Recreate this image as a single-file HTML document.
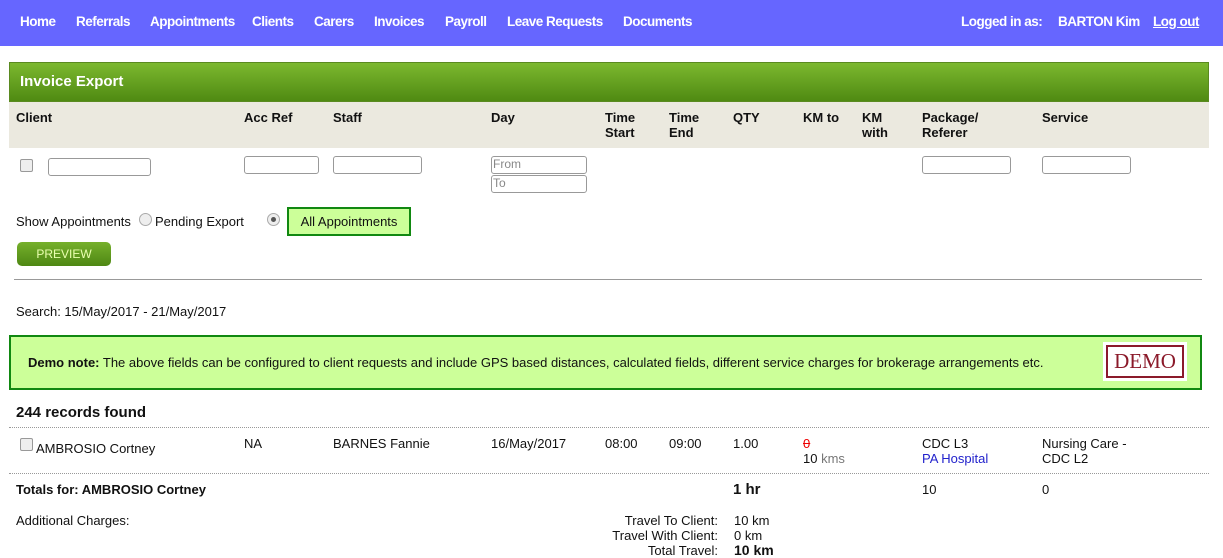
<!DOCTYPE html>
<html><head><style>
body{margin:0;width:1223px;height:556px;overflow:hidden;background:#fff;font-family:"Liberation Sans",sans-serif;font-size:13px;color:#111;position:relative}
.a{position:absolute;white-space:nowrap}
.nav{position:absolute;left:0;top:0;width:1223px;height:46px;background:#6666ff}
.nav span{position:absolute;top:14px;color:#fff;font-size:13.5px;font-weight:bold;letter-spacing:-0.5px}
.hdr{position:absolute;left:9px;top:62px;width:1200px;height:40px;background:linear-gradient(#7cb82f,#4f8a12);border:1px solid #5a8a20;box-sizing:border-box}
.th{position:absolute;left:9px;top:102px;width:1200px;height:46px;background:#ebe9df}
input.t{position:absolute;height:18px;border:1px solid #999;border-radius:3px;box-sizing:border-box;background:#fff}
.b{font-weight:bold}
.dot{position:absolute;left:9px;width:1200px;border-top:1px dotted #999}
</style></head><body>
<div class="nav">
<span style="left:20px">Home</span><span style="left:76px">Referrals</span><span style="left:150px">Appointments</span><span style="left:252px">Clients</span><span style="left:314px">Carers</span><span style="left:374px">Invoices</span><span style="left:445px">Payroll</span><span style="left:507px">Leave Requests</span><span style="left:623px">Documents</span>
<span style="left:961px">Logged in as:</span><span style="left:1058px">BARTON Kim</span><span style="left:1153px;text-decoration:underline">Log out</span>
</div>
<div class="hdr"><span class="a b" style="left:10px;top:10px;color:#fff;font-size:15px">Invoice Export</span></div>
<div class="th"></div>
<span class="a b" style="left:16px;top:110px">Client</span>
<span class="a b" style="left:244px;top:110px">Acc Ref</span>
<span class="a b" style="left:333px;top:110px">Staff</span>
<span class="a b" style="left:491px;top:110px">Day</span>
<span class="a b" style="left:605px;top:110px;line-height:15px">Time<br>Start</span>
<span class="a b" style="left:669px;top:110px;line-height:15px">Time<br>End</span>
<span class="a b" style="left:733px;top:110px">QTY</span>
<span class="a b" style="left:803px;top:110px">KM to</span>
<span class="a b" style="left:862px;top:110px;line-height:15px">KM<br>with</span>
<span class="a b" style="left:922px;top:110px;line-height:15px">Package/<br>Referer</span>
<span class="a b" style="left:1042px;top:110px">Service</span>
<div class="a" style="left:20px;top:159px;width:11px;height:11px;border:1px solid #999;border-radius:2px;background:#eee"></div>
<input class="t" style="left:48px;top:158px;width:103px">
<input class="t" style="left:244px;top:156px;width:75px">
<input class="t" style="left:333px;top:156px;width:89px">
<div class="a" style="left:491px;top:156px;width:96px;height:18px;border:1px solid #999;border-radius:3px;box-sizing:border-box;color:#888;font-size:12px;padding-left:1px">From</div>
<div class="a" style="left:491px;top:175px;width:96px;height:18px;border:1px solid #999;border-radius:3px;box-sizing:border-box;color:#888;font-size:12px;padding-left:1px">To</div>
<input class="t" style="left:922px;top:156px;width:89px">
<input class="t" style="left:1042px;top:156px;width:89px">
<span class="a" style="left:16px;top:214px">Show Appointments</span>
<div class="a" style="left:139px;top:213px;width:11px;height:11px;border:1px solid #aaa;border-radius:50%;background:#eee"></div>
<span class="a" style="left:155px;top:214px">Pending Export</span>
<div class="a" style="left:267px;top:213px;width:11px;height:11px;border:1px solid #aaa;border-radius:50%;background:#eee"><div style="margin:3px;width:5px;height:5px;border-radius:50%;background:#555"></div></div>
<div class="a" style="left:287px;top:207px;width:124px;height:29px;border:2px solid #118811;background:#ccff99;box-sizing:border-box;text-align:center;line-height:25px">All Appointments</div>
<div class="a" style="left:17px;top:242px;width:94px;height:24px;border-radius:5px;background:linear-gradient(#76b02c,#4e8713);color:#eaffb0;text-align:center;line-height:24px;font-size:12px">PREVIEW</div>
<div class="a" style="left:14px;top:279px;width:1188px;border-top:1px solid #999"></div>
<span class="a" style="left:16px;top:304px">Search: 15/May/2017 - 21/May/2017</span>
<div class="a" style="left:9px;top:335px;width:1193px;height:55px;border:2px solid #118811;background:#ccff99;box-sizing:border-box"></div>
<span class="a" style="left:28px;top:355px"><b>Demo note:</b> The above fields can be configured to client requests and include GPS based distances, calculated fields, different service charges for brokerage arrangements etc.</span>
<div class="a" style="left:1103px;top:342px;width:84px;height:39px;background:#fff"><div style="margin:3px;height:29px;border:2px solid #8b1a2a;color:#8b1a2a;font-family:'Liberation Serif',serif;font-size:21px;text-align:center;line-height:29px">DEMO</div></div>
<span class="a b" style="left:16px;top:404px;font-size:15px">244 records found</span>
<div class="dot" style="top:427px"></div>
<div class="a" style="left:20px;top:438px;width:11px;height:11px;border:1px solid #999;border-radius:2px;background:#eee"></div>
<span class="a" style="left:36px;top:441px">AMBROSIO Cortney</span>
<span class="a" style="left:244px;top:436px">NA</span>
<span class="a" style="left:333px;top:436px">BARNES Fannie</span>
<span class="a" style="left:491px;top:436px">16/May/2017</span>
<span class="a" style="left:605px;top:436px">08:00</span>
<span class="a" style="left:669px;top:436px">09:00</span>
<span class="a" style="left:733px;top:436px">1.00</span>
<span class="a" style="left:803px;top:436px;color:#e00;text-decoration:line-through">0</span>
<span class="a" style="left:803px;top:451px">10 <span style="color:#777">kms</span></span>
<span class="a" style="left:922px;top:436px">CDC L3</span>
<span class="a" style="left:922px;top:451px;color:#22c">PA Hospital</span>
<span class="a" style="left:1042px;top:436px;line-height:15px">Nursing Care -<br>CDC L2</span>
<div class="dot" style="top:473px"></div>
<span class="a b" style="left:16px;top:482px">Totals for: AMBROSIO Cortney</span>
<span class="a b" style="left:733px;top:481px;font-size:15px">1 hr</span>
<span class="a" style="left:922px;top:482px">10</span>
<span class="a" style="left:1042px;top:482px">0</span>
<span class="a" style="left:16px;top:513px">Additional Charges:</span>
<span class="a" style="left:560px;top:513px;width:158px;text-align:right;line-height:15px">Travel To Client:<br>Travel With Client:<br>Total Travel:</span>
<span class="a" style="left:734px;top:513px;line-height:15px">10 km<br>0 km<br><b style="font-size:14px">10 km</b></span>
</body></html>
